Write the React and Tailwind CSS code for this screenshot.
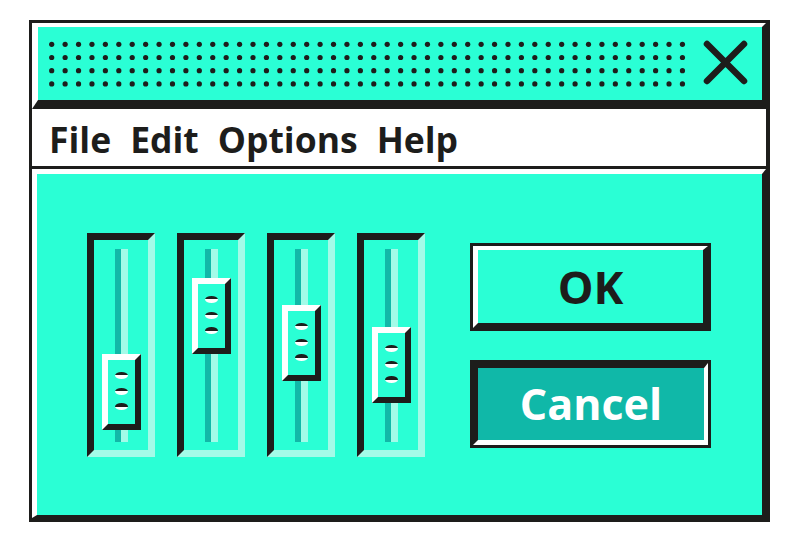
const TEAL = "bg-[#2affd5]";

// dot grid in the title bar
function DotGrid() {
  const cols = Array.from({ length: 48 }, (_, i) => i);
  const rows = [0, 1, 2, 3];
  return (
    <svg width="640" height="47" viewBox="0 0 640 47">
      {rows.map((r) =>
        cols.map((c) => (
          <circle key={`${r}-${c}`} cx={2.7 + c * 13.42} cy={3.3 + r * 13.2} r="2.6" fill="#1d1d1b" />
        ))
      )}
    </svg>
  );
}

function CloseIcon() {
  return (
    <svg width="45" height="45" viewBox="0 0 45 45">
      <path d="M4 4 L41 41 M41 4 L4 41" stroke="#1d1d1b" strokeWidth="6.5" strokeLinecap="round" />
    </svg>
  );
}

function Slot() {
  return (
    <div className="w-[13px] h-[7px] rounded-[50%] overflow-hidden flex flex-col">
      <div className="h-1/2 bg-[#1d1d1b]" />
      <div className="h-1/2 bg-white" />
    </div>
  );
}

function Slider({ knobTop }) {
  return (
    <div className="relative w-[68px] h-[224px] border-t-[7px] border-l-[7px] border-r-[7px] border-b-[7px] border-t-[#1d1d1b] border-l-[#1d1d1b] border-r-[#a3fbe8] border-b-[#a3fbe8]">
      {/* track */}
      <div className="absolute left-[21px] top-[9px] h-[193px] flex">
        <div className="w-[6px] h-full bg-[#12b8a8]" />
        <div className="w-[7px] h-full bg-[#a3fbe8]" />
      </div>
      {/* knob */}
      <div
        className={`absolute left-[8px] w-[39px] h-[76px] border-[6px] border-t-white border-l-white border-r-[#1d1d1b] border-b-[#1d1d1b] ${TEAL} flex flex-col items-center justify-center gap-[8.7px] pb-[2px]`}
        style={{ top: knobTop }}
      >
        <Slot />
        <Slot />
        <Slot />
      </div>
    </div>
  );
}

export default function App() {
  const knobs = [114, 38, 65, 87];
  return (
    <div className="w-[800px] h-[544px] bg-white overflow-hidden" style={{ fontFamily: '"Open Sans", "Noto Sans", sans-serif' }}>
      <div className="ml-[29px] mt-[20px] w-[741px] h-[502px] bg-white border-t-[3px] border-l-[3px] border-r-[4px] border-b-[4px] border-[#1d1d1b] flex flex-col">
        {/* title bar */}
        <div className={`h-[86px] shrink-0 border-t-[4px] border-l-[6px] border-r-[4px] border-b-[9px] border-t-white border-l-white border-r-[#1d1d1b] border-b-[#1d1d1b] ${TEAL} flex items-start pl-[11px] pt-[14px]`}>
          <DotGrid />
          <div className="ml-[14px] -mt-[1px]">
            <CloseIcon />
          </div>
        </div>

        {/* menu bar */}
        <div className="h-[60px] shrink-0 bg-white border-b-[3px] border-[#1d1d1b] flex items-center pl-[17px] pt-[5px] gap-[19px] text-[35.5px] font-bold text-[#1d1d1b]">
          <span>File</span>
          <span>Edit</span>
          <span>Options</span>
          <span>Help</span>
        </div>

        {/* body */}
        <div className={`flex-1 border-t-[5px] border-l-[5px] border-r-[4px] border-b-[3px] border-t-white border-l-white border-r-[#1d1d1b] border-b-[#1d1d1b] ${TEAL} flex items-start pl-[50px] pt-[59px]`}>
          <div className="flex gap-[22px]">
            {knobs.map((t, i) => (
              <Slider key={i} knobTop={t} />
            ))}
          </div>

          <div className="ml-[45px] mt-[10px] flex flex-col gap-[29px]">
            <div className="w-[241px] h-[88px] border-[3px] border-[#1d1d1b]">
              <div className={`h-full border-t-[4px] border-l-[5px] border-r-[5px] border-b-[5px] border-t-white border-l-white border-r-[#1d1d1b] border-b-[#1d1d1b] ${TEAL} flex items-center justify-center text-[45px] font-bold text-[#1d1d1b]`}>
                OK
              </div>
            </div>
            <div className="w-[241px] h-[88px] border-[3px] border-[#1d1d1b]">
              <div className="h-full border-t-[5px] border-l-[5px] border-r-[4px] border-b-[5px] border-t-[#1d1d1b] border-l-[#1d1d1b] border-r-white border-b-white bg-[#10b8a8] flex items-center justify-center text-[43px] font-bold text-white">
                Cancel
              </div>
            </div>
          </div>
        </div>
      </div>
    </div>
  );
}
